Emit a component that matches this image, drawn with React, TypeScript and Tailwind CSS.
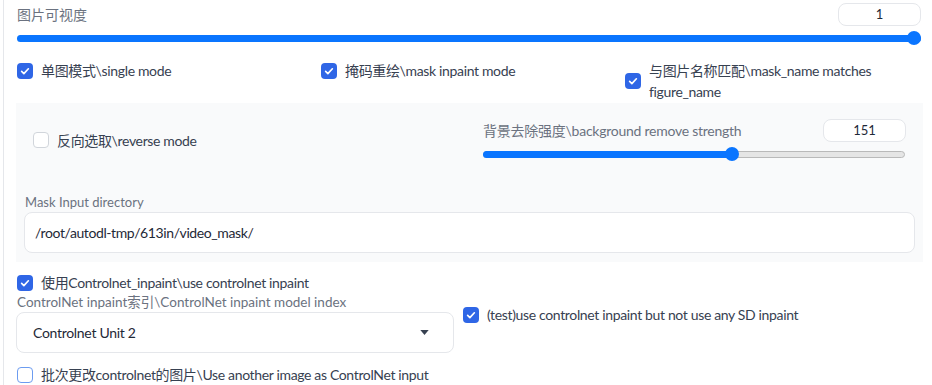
import React from "react";

const font = { fontFamily: '"Lato", "Noto Sans CJK SC", sans-serif' };

const Check = ({ checked, focus }: { checked?: boolean; focus?: boolean }) =>
  checked ? (
    <span className="flex h-4 w-4 shrink-0 items-center justify-center rounded-[4px] bg-[#2f66e6]">
      <svg viewBox="0 0 16 16" className="h-3 w-3" fill="none">
        <path d="M3.5 8.5l3 3 6-6.5" stroke="white" strokeWidth="2.2" strokeLinecap="round" strokeLinejoin="round" />
      </svg>
    </span>
  ) : (
    <span
      className={
        "h-4 w-4 shrink-0 rounded-[4px] border bg-white " +
        (focus ? "border-[#6c9cf0]" : "border-[#d1d5db]")
      }
    />
  );

const CheckItem = ({
  checked,
  focus,
  children,
  className = "",
}: {
  checked?: boolean;
  focus?: boolean;
  children: React.ReactNode;
  className?: string;
}) => (
  <div className={"flex items-center gap-2 text-[14px] tracking-[-0.35px] text-[#374151] " + className}>
    <Check checked={checked} focus={focus} />
    <span className="leading-[21px]">{children}</span>
  </div>
);

const Slider = ({ pct, bordered }: { pct: number; bordered?: boolean }) => (
  <div className="relative h-[14px]">
    <div
      className={
        "absolute left-0 right-0 top-[3.5px] h-[7px] rounded-full bg-[#e5e5e5] " +
        (bordered ? "border border-[#b9b9b9]" : "")
      }
    />
    <div
      className="absolute left-0 top-[3.5px] h-[7px] rounded-full bg-[#0a75ff]"
      style={{ width: `${pct}%` }}
    />
    <div
      className="absolute top-0 h-[14px] w-[14px] -translate-x-1/2 rounded-full bg-[#0a75ff]"
      style={{ left: `calc(${pct}% ${pct > 99 ? "- 7px" : "+ 0px"})` }}
    />
  </div>
);

const NumberBox = ({ value }: { value: string }) => (
  <div className="flex h-[23px] w-[83px] items-center justify-center rounded-[8px] border border-[#e5e7eb] bg-white text-[13px] text-[#1f2937]">
    {value}
  </div>
);

export default function App() {
  return (
    <div className="flex h-[385px] w-[932px] overflow-hidden bg-white" style={font}>
      <div className="ml-[3px] flex-1 border-l border-[#e5e7eb] pl-[12px] pr-[9px]">
        {/* visibility slider */}
        <div className="pl-px pr-[2px] pt-[3px]">
          <div className="flex items-center justify-between">
            <span className="text-[14px] text-[#6b7280]">图片可视度</span>
            <NumberBox value="1" />
          </div>
          <div className="mt-[5px]">
            <Slider pct={100} />
          </div>
        </div>

        {/* mode checkboxes */}
        <div className="mt-[15px] flex items-start pl-px">
          <CheckItem checked className="w-[304px]">
            单图模式\single mode
          </CheckItem>
          <CheckItem checked className="w-[304px]">
            掩码重绘\mask inpaint mode
          </CheckItem>
          <CheckItem checked className="flex-1">
            与图片名称匹配\mask_name matches
            <br />
            figure_name
          </CheckItem>
        </div>

        {/* mask panel */}
        <div className="mt-px bg-[#f9fafb] px-[8px] pb-[9px] pt-[16px]">
          <div className="flex items-center">
            <div className="flex-1 pl-[9px]">
              <CheckItem>反向选取\reverse mode</CheckItem>
            </div>
            <div className="mr-[9px] w-[423px]">
              <div className="flex items-center justify-between">
                <span className="text-[14px] tracking-[-0.25px] text-[#6b7280]">背景去除强度\background remove strength</span>
                <NumberBox value="151" />
              </div>
              <div className="mt-[5px] pr-px">
                <Slider pct={59} bordered />
              </div>
            </div>
          </div>
          <div className="mt-[31px] pl-px text-[13px] leading-[20px] text-[#6b7280]">Mask Input directory</div>
          <div className="flex h-[41px] items-center rounded-[8px] border border-[#e5e7eb] bg-white px-[10px] text-[14px] tracking-[-0.4px] text-[#1f2937]">
            /root/autodl-tmp/613in/video_mask/
          </div>
        </div>

        {/* controlnet */}
        <div className="mt-[10px] pl-px">
          <CheckItem checked>使用Controlnet_inpaint\use controlnet inpaint</CheckItem>
        </div>
        <div className="flex">
          <div className="w-[438px]">
            <div className="pl-px text-[13.5px] leading-[19px] text-[#6b7280]">
              ControlNet inpaint索引\ControlNet inpaint model index
            </div>
            <div className="flex h-[41px] items-center justify-between rounded-[8px] border border-[#e5e7eb] bg-white pl-[16px] pr-[24px] text-[14px] tracking-[-0.3px] text-[#1f2937]">
              <span>Controlnet Unit 2</span>
              <svg viewBox="0 0 10 6" className="h-[5px] w-[9px]">
                <path d="M0 0h10L5 6z" fill="#374151" />
              </svg>
            </div>
          </div>
          <div className="pl-[9px] pt-[11px]">
            <CheckItem checked>(test)use controlnet inpaint but not use any SD inpaint</CheckItem>
          </div>
        </div>
        <div className="mt-[11px] pl-px">
          <CheckItem focus>批次更改controlnet的图片\Use another image as ControlNet input</CheckItem>
        </div>
      </div>
    </div>
  );
}
